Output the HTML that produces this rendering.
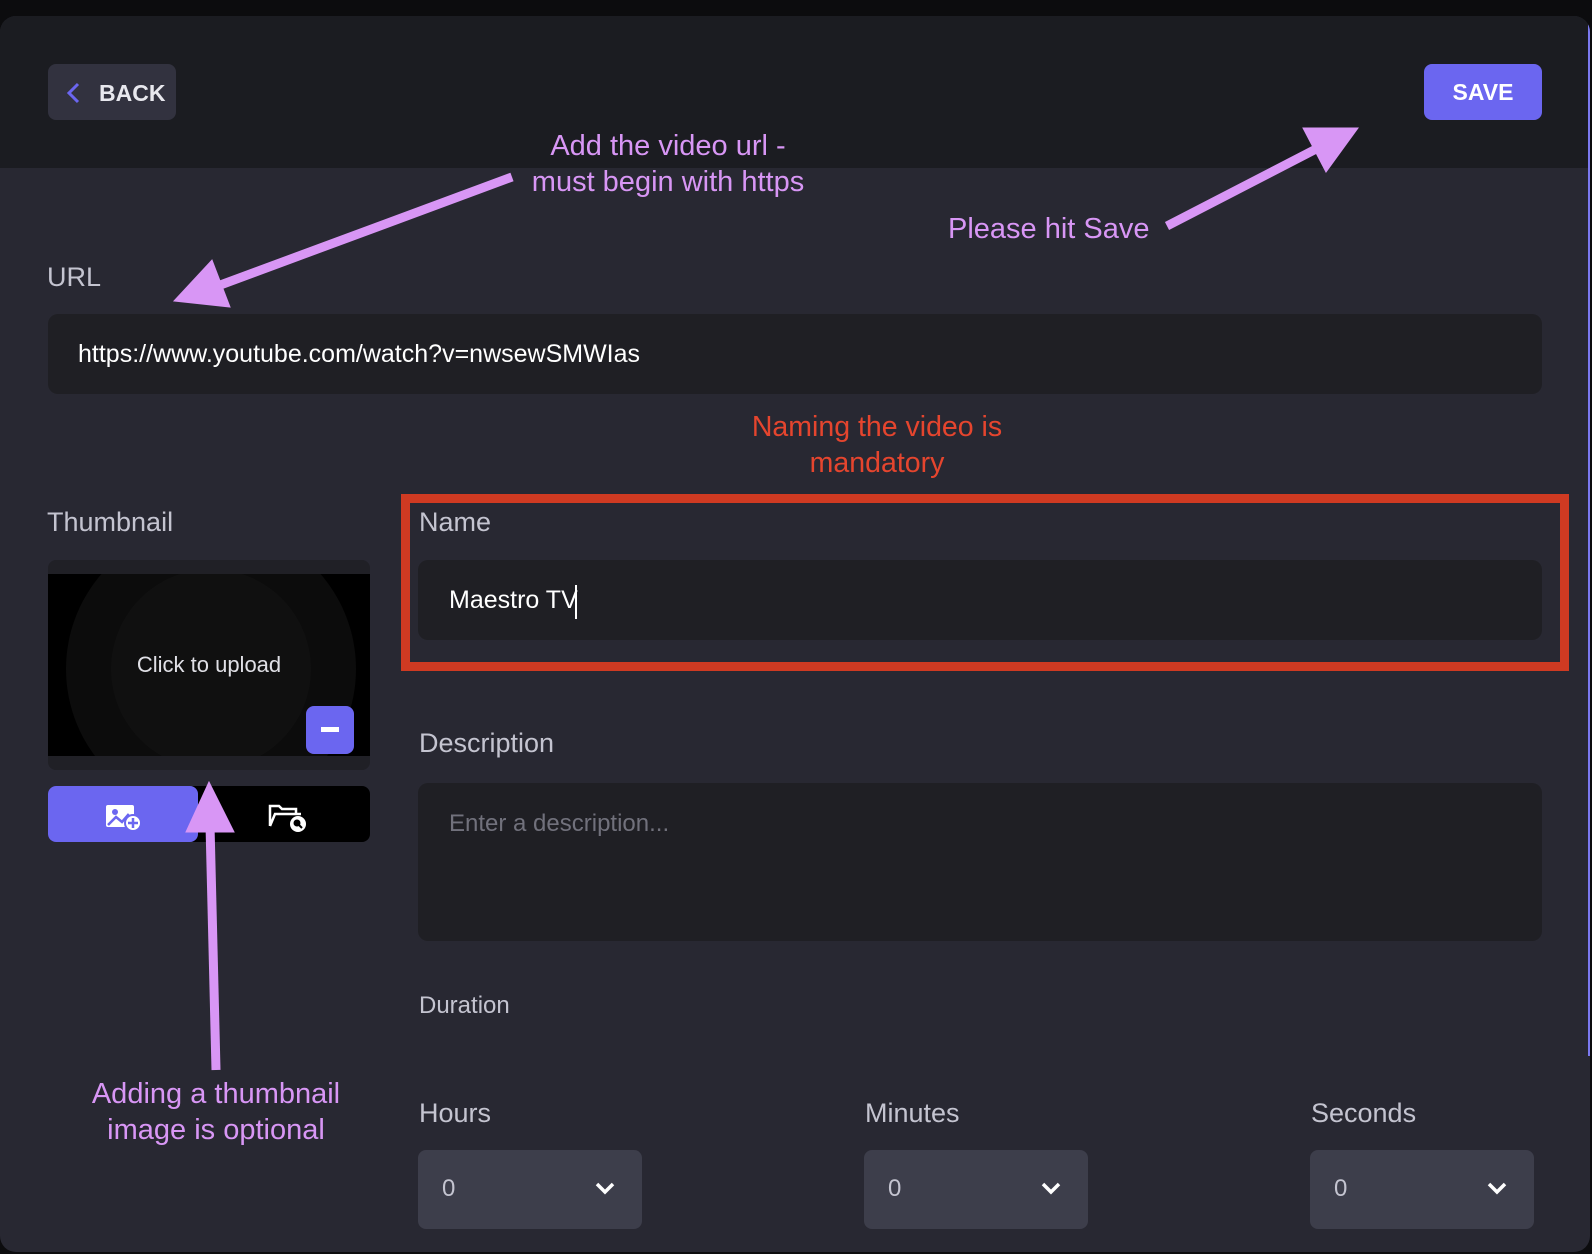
<!DOCTYPE html>
<html><head><meta charset="utf-8"><style>
*{margin:0;padding:0;box-sizing:border-box}
body{width:1592px;height:1254px;background:#0c0c0e;position:relative;overflow:hidden;font-family:"Liberation Sans",sans-serif}
.panel{position:absolute;left:0;top:16px;width:1590px;height:1236px;background:#282832;border-radius:16px;overflow:hidden}
.hdr{position:absolute;left:0;top:0;width:100%;height:152px;background:#1b1c21}
.abs{position:absolute}
.lbl{position:absolute;color:#c4c4d0;font-size:27px}
.inp{position:absolute;background:#1f1f24;border-radius:10px}
.sel{position:absolute;background:#3d3e4b;border-radius:8px;width:224px;height:79px}
.sel span{position:absolute;left:24px;top:25px;color:#c4c4d0;font-size:24px}
.sel svg{position:absolute;right:26px;top:30px}
.ann{position:absolute;color:#d896f5;font-size:29px;text-align:center;line-height:36px}
</style></head><body>
<div class="panel">
 <div class="hdr"></div>
 <div class="abs" style="left:1588px;top:0;width:4px;height:1040px;background:#7b79f0"></div>
</div>
<div class="abs" style="left:48px;top:64px;width:128px;height:56px;background:#32323f;border-radius:8px"></div>
<svg class="abs" style="left:66px;top:82px" width="16" height="22"><path d="M12 2 L3 11 L12 20" stroke="#6b66f0" stroke-width="3" fill="none"/></svg>
<div class="abs" style="left:99px;top:80px;color:#e8e8ee;font-size:23px;font-weight:bold">BACK</div>
<div class="abs" style="left:1424px;top:64px;width:118px;height:56px;background:#6b66f0;border-radius:8px;color:#fff;font-size:23px;font-weight:bold;text-align:center;line-height:56px">SAVE</div>

<div class="lbl" style="left:47px;top:262px">URL</div>
<div class="inp" style="left:48px;top:314px;width:1494px;height:80px"></div>
<div class="abs" style="left:78px;top:340px;color:#fff;font-size:25px">https://www.youtube.com/watch?v=nwsewSMWIas</div>

<div class="abs" style="left:401px;top:494px;width:1168px;height:177px;border:9px solid #cf3a22"></div>
<div class="lbl" style="left:47px;top:507px">Thumbnail</div>
<div class="lbl" style="left:419px;top:507px">Name</div>
<div class="inp" style="left:418px;top:560px;width:1124px;height:80px"></div>
<div class="abs" style="left:449px;top:586px;color:#fff;font-size:25px">Maestro TV</div>
<div class="abs" style="left:575px;top:585px;width:2px;height:34px;background:#fff"></div>

<div class="abs" style="left:48px;top:560px;width:322px;height:210px;background:#202026;border-radius:8px"></div>
<div class="abs" style="left:48px;top:574px;width:322px;height:182px;background:#000;overflow:hidden">
 <div class="abs" style="left:18px;top:-50px;width:290px;height:290px;border-radius:50%;background:#0c0c0c"></div>
 <div class="abs" style="left:63px;top:-5px;width:200px;height:200px;border-radius:50%;background:#101010"></div>
 <div class="abs" style="left:0;top:78px;width:322px;text-align:center;color:#e0e0e6;font-size:22px">Click to upload</div>
</div>
<div class="abs" style="left:306px;top:706px;width:48px;height:48px;background:#6b66f0;border-radius:8px"><div class="abs" style="left:15px;top:21px;width:18px;height:5px;background:#fff"></div></div>
<div class="abs" style="left:48px;top:786px;width:322px;height:56px;background:#000;border-radius:8px"></div>
<div class="abs" style="left:48px;top:786px;width:150px;height:56px;background:#6b66f0;border-radius:8px"></div>
<svg class="abs" style="left:104px;top:802px" width="40" height="30"><rect x="2" y="3" width="28" height="22" rx="2" fill="#fff"/><circle cx="11" cy="10" r="3" fill="#6b66f0"/><path d="M4 23 L12 15 L18 20 L24 13 L29 18" stroke="#6b66f0" stroke-width="2.5" fill="none"/><circle cx="29" cy="21" r="8" fill="#fff" stroke="#6b66f0" stroke-width="2"/><path d="M29 16v10M24 21h10" stroke="#6b66f0" stroke-width="2.5"/></svg>
<svg class="abs" style="left:268px;top:802px" width="42" height="30"><path d="M2 24 V4 H11 L14 7 H28 V13 M2 24 L7 12 H33" stroke="#fff" stroke-width="2.5" fill="none"/><circle cx="30" cy="22" r="8" fill="#fff"/><circle cx="29" cy="21" r="3.5" fill="#000"/><path d="M31 23 L34 26" stroke="#000" stroke-width="2"/></svg>

<div class="lbl" style="left:419px;top:728px">Description</div>
<div class="inp" style="left:418px;top:783px;width:1124px;height:158px"></div>
<div class="abs" style="left:449px;top:810px;color:#71717c;font-size:24px">Enter a description...</div>
<div class="abs" style="left:419px;top:992px;color:#c4c4d0;font-size:24px">Duration</div>
<div class="lbl" style="left:419px;top:1098px">Hours</div>
<div class="lbl" style="left:865px;top:1098px">Minutes</div>
<div class="lbl" style="left:1311px;top:1098px">Seconds</div>
<div class="sel" style="left:418px;top:1150px"><span>0</span><svg width="22" height="16"><path d="M3 4 L11 12 L19 4" stroke="#fff" stroke-width="3.5" fill="none"/></svg></div>
<div class="sel" style="left:864px;top:1150px"><span>0</span><svg width="22" height="16"><path d="M3 4 L11 12 L19 4" stroke="#fff" stroke-width="3.5" fill="none"/></svg></div>
<div class="sel" style="left:1310px;top:1150px"><span>0</span><svg width="22" height="16"><path d="M3 4 L11 12 L19 4" stroke="#fff" stroke-width="3.5" fill="none"/></svg></div>

<svg class="abs" style="left:0;top:0" width="1592" height="1254">
 <g fill="#d896f5" stroke="#d896f5">
  <path d="M512 177 L215 287" stroke-width="9"/>
  <polygon points="174,301 212,260 230,307" stroke-width="1"/>
  <path d="M1167 226 L1318 148" stroke-width="9"/>
  <polygon points="1303,128 1358,128 1326,172" stroke-width="1"/>
  <path d="M216 1070 L210 825" stroke-width="9"/>
  <polygon points="209,782 186,832 234,832" stroke-width="1"/>
 </g>
</svg>
<div class="ann" style="left:508px;top:128px;width:320px">Add the video url -<br>must begin with https</div>
<div class="ann" style="left:948px;top:211px;width:230px;text-align:left">Please hit Save</div>
<div class="ann" style="left:56px;top:1076px;width:320px">Adding a thumbnail<br>image is optional</div>
<div class="ann" style="left:717px;top:409px;width:320px;color:#e5452e;font-size:28.5px">Naming the video is<br>mandatory</div>
</body></html>
